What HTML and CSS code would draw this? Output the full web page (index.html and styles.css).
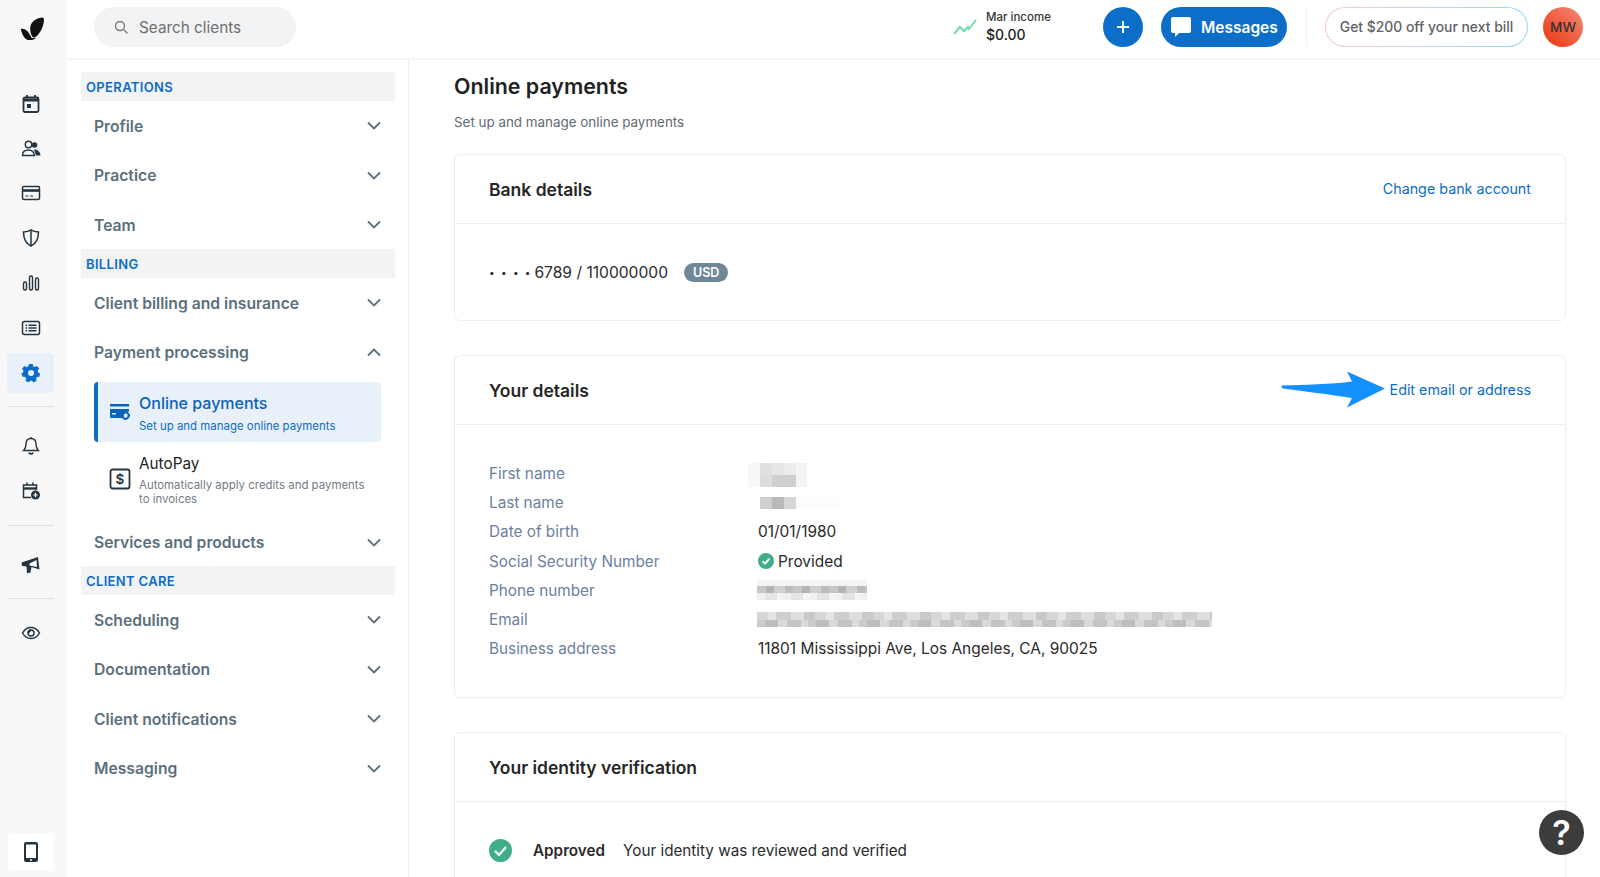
FILE: index.html
```html
<!DOCTYPE html>
<html lang="en">
<head>
<meta charset="utf-8">
<title>Online payments</title>
<link rel="stylesheet" href="styles.css">
</head>
<body>
<div class="app">
  <nav class="rail">
    <div class="rail-logo">
      <svg width="26" height="24" viewBox="0 0 26 24"><path fill="#111" d="M12.500 10C13.500 5 19.500 2 24.500 1.500 26 1.500 26 3.500 25.800 6 25 11 22.500 17 18.500 20.200 16.500 21.500 15 21.800 14.500 21 12.500 18 11.800 14 12.500 10zM2.800 12.800c4-.8 8 2.200 10.700 9 1 .7 3 .5 5-.3-3 2.600-6 3.100-8.500 2.500-3.500-.6-6.300-6-7.200-11.200z"/></svg>
    </div>
    <div class="rail-group first">
      <a class="rail-item"><svg width="20" height="20" viewBox="0 0 20 20" fill="none" stroke="#25343f" stroke-width="1.800"><rect x="2.500" y="3.500" width="15" height="14.500" rx="1.500"/><path d="M2.500 6h15" stroke-width="3"/><path d="M6 1v3M14 1v3"/><rect x="6" y="10" width="4" height="4" fill="#25343f" stroke="none"/></svg></a>
      <a class="rail-item"><svg width="20" height="20" viewBox="0 0 20 20" fill="none" stroke="#25343f" stroke-width="1.400"><circle cx="7.500" cy="5.500" r="3.200"/><path d="M1.500 16.500c0-3.500 2.500-5.500 6-5.500s5.500 2 6 5.500z"/><circle cx="13.500" cy="6" r="2.800" fill="#25343f" stroke="none"/><path d="M13 10.500c3.500-.5 6 2 6.500 6h-4.500z" fill="#25343f" stroke="none"/></svg></a>
      <a class="rail-item"><svg width="20" height="20" viewBox="0 0 20 20" fill="none" stroke="#25343f" stroke-width="1.500"><rect x="1.500" y="3.500" width="17" height="13" rx="1.500"/><path d="M1.500 7.500h17" stroke-width="2.600"/><path d="M4.500 13h3M9 13h3" stroke-width="1.200"/></svg></a>
      <a class="rail-item"><svg width="20" height="20" viewBox="0 0 20 20" fill="none" stroke="#25343f" stroke-width="1.500"><path d="M10 1.800c2 1.300 4.800 2 7.500 2.200 0 6-1.300 11-7.500 14.200C3.800 15 2.500 10 2.500 4c2.700-.2 5.500-.9 7.500-2.200z"/><path d="M10 2v16"/></svg></a>
      <a class="rail-item"><svg width="20" height="20" viewBox="0 0 20 20" fill="none" stroke="#25343f" stroke-width="1.400"><rect x="2.500" y="9" width="3" height="8" rx="1.500"/><rect x="8.500" y="3" width="3" height="14" rx="1.500"/><rect x="14.500" y="5" width="3" height="12" rx="1.500"/></svg></a>
      <a class="rail-item"><svg width="20" height="20" viewBox="0 0 20 20" fill="none" stroke="#25343f" stroke-width="1.500"><rect x="1.500" y="3.500" width="17" height="13" rx="2"/><path d="M4.500 7.300h1.500M4.500 10h1.500M4.500 12.700h1.500M7.500 7.300h8M7.500 10h8M7.500 12.700h8"/></svg></a>
      <a class="rail-item active"><svg width="20" height="20" viewBox="0 0 20 20"><path fill="#0b6dc7" fill-rule="evenodd" d="M8.300 1h3.400l.5 2.400 1.500.7 2.200-1.200 2.300 2.700-1.500 2 .3 1.700 2 1.100-.6 3.400-2.400.2-1 1.400.7 2.300-3 1.700-1.700-1.700h-1.800l-1.700 1.700-3-1.700.7-2.300-1-1.400-2.400-.2L.2 10.500l2-1.100.3-1.700-1.500-2 2.300-2.700 2.200 1.200 1.500-.7zM10 7a3 3 0 1 0 0 6 3 3 0 0 0 0-6z"/></svg></a>
    </div>
    <div class="rail-rule"></div>
    <div class="rail-group">
      <a class="rail-item"><svg width="20" height="20" viewBox="0 0 20 20" fill="none" stroke="#25343f" stroke-width="1.400"><path d="M10 2.500c-3.200 0-5 2.300-5 5.500 0 3.500-.8 5-2.300 6.500h14.600C15.800 13 15 11.500 15 8c0-3.200-1.800-5.500-5-5.500z"/><path d="M10 1v1.500"/><path d="M8 16.500c.3 1.700 3.700 1.700 4 0" stroke-width="1.800"/></svg></a>
      <a class="rail-item"><svg width="20" height="20" viewBox="0 0 20 20" fill="none" stroke="#25343f" stroke-width="1.500"><path d="M10 16.500H2.500v-12.500h13v5"/><path d="M2.500 7.500h13" stroke-width="2.400"/><path d="M6 1.500v3M12 1.500v3"/><circle cx="14.500" cy="14" r="4.500" fill="#25343f" stroke="none"/><path d="M14.500 11.800v4.400M12.300 14h4.400" stroke="#fff" stroke-width="1.200"/></svg></a>
    </div>
    <div class="rail-rule"></div>
    <div class="rail-group">
      <a class="rail-item"><svg width="20" height="20" viewBox="0 0 20 20"><path fill="#25343f" d="M17 2l1.500 12.500-8-2.500-1 5.500-3.500.8-.5-6.800L1 11l-.5-3.500zM15.500 5l-7 3.500v2l7.500 1.500z"/></svg></a>
    </div>
    <div class="rail-rule"></div>
    <div class="rail-group last">
      <a class="rail-item"><svg width="20" height="20" viewBox="0 0 20 20" fill="none" stroke="#25343f" stroke-width="1.500"><path d="M1.500 10C3.500 6.500 6.500 4.500 10 4.500s6.500 2 8.500 5.500c-2 3.500-5 5.500-8.500 5.500S3.500 13.500 1.500 10z"/><circle cx="10" cy="10" r="3"/><path d="M10 7.500a2.500 2.500 0 0 0-2.500 2.500" stroke-width="2"/></svg></a>
    </div>
    <a class="rail-phone"><svg width="16" height="22" viewBox="0 0 16 22"><path fill="#25343f" fill-rule="evenodd" d="M3 1h10a2 2 0 0 1 2 2v16a2 2 0 0 1-2 2H3a2 2 0 0 1-2-2V3a2 2 0 0 1 2-2zm0 2.500V17h10V3.500z"/><circle cx="8" cy="19" r="1" fill="#fff"/></svg></a>
  </nav>

  <div class="page">
    <header class="topbar">
      <div class="search">
        <svg width="15" height="15" viewBox="0 0 15 15" fill="none" stroke="#777" stroke-width="1.300"><circle cx="6" cy="6" r="4.500"/><path d="M9.500 9.500l4 4"/></svg>
        <span>Search clients</span>
      </div>
      <div class="top-right">
        <svg class="trend" width="24" height="18" viewBox="0 0 24 18" fill="none" stroke="#6fdcae" stroke-width="2"><path d="M1 16l6-7 4 4 4-4 1 2 7-9"/></svg>
        <div class="income"><div class="income-label">Mar income</div><div class="income-value">$0.00</div></div>
        <button class="round-add"><svg width="16" height="16" viewBox="0 0 16 16" stroke="#fff" stroke-width="2"><path d="M8 2v12M2 8h12"/></svg></button>
        <button class="messages"><svg width="22" height="24" viewBox="0 0 22 24"><path fill="#fff" d="M3 2h16a2 2 0 0 1 2 2v12a2 2 0 0 1-2 2H9l-4 4v-4H3a2 2 0 0 1-2-2V4a2 2 0 0 1 2-2z"/></svg><span>Messages</span></button>
        <div class="top-rule"></div>
        <button class="promo"><span>Get $200 off your next bill</span></button>
        <div class="avatar">MW</div>
      </div>
    </header>

    <div class="body">
      <aside class="settings">
        <div class="sec-head">OPERATIONS</div>
        <div class="nav-item"><span>Profile</span><svg class="chev" width="14" height="9" viewBox="0 0 14 9"><path d="M1 1.500l6 6 6-6"/></svg></div>
        <div class="nav-item"><span>Practice</span><svg class="chev" width="14" height="9" viewBox="0 0 14 9"><path d="M1 1.500l6 6 6-6"/></svg></div>
        <div class="nav-item last"><span>Team</span><svg class="chev" width="14" height="9" viewBox="0 0 14 9"><path d="M1 1.500l6 6 6-6"/></svg></div>
        <div class="sec-head">BILLING</div>
        <div class="nav-item"><span>Client billing and insurance</span><svg class="chev" width="14" height="9" viewBox="0 0 14 9"><path d="M1 1.500l6 6 6-6"/></svg></div>
        <div class="nav-item"><span>Payment processing</span><svg class="chev" width="14" height="9" viewBox="0 0 14 9"><path d="M1 7.500l6-6 6 6"/></svg></div>
        <div class="sub-item current">
          <svg width="22" height="18" viewBox="0 0 22 18"><path fill="#0b62b9" d="M1 1h19v2.500H1zM1 6h19v2.500a4.500 4.500 0 0 0-4.500 2.500 4.500 4.500 0 0 0-1 4H2a1 1 0 0 1-1-1zM3 10v1.500h4V10z"/><circle cx="16.500" cy="12.500" r="3.200" fill="none" stroke="#0b62b9" stroke-width="2"/><path d="M16.500 8v1.500M16.500 15.500V17M12 12.500h1.500M19.500 12.500H21" stroke="#0b62b9" stroke-width="1.500"/></svg>
          <div><div class="sub-title">Online payments</div><div class="sub-desc">Set up and manage online payments</div></div>
        </div>
        <div class="sub-item auto">
          <svg width="22" height="22" viewBox="0 0 22 22" fill="none"><rect x="1.500" y="1.500" width="19" height="19" rx="2" stroke="#25343f" stroke-width="1.800"/><text x="11" y="16" text-anchor="middle" class="dollar">$</text></svg>
          <div><div class="sub-title">AutoPay</div><div class="sub-desc">Automatically apply credits and payments to invoices</div></div>
        </div>
        <div class="nav-item services"><span>Services and products</span><svg class="chev" width="14" height="9" viewBox="0 0 14 9"><path d="M1 1.500l6 6 6-6"/></svg></div>
        <div class="sec-head care">CLIENT CARE</div>
        <div class="nav-item"><span>Scheduling</span><svg class="chev" width="14" height="9" viewBox="0 0 14 9"><path d="M1 1.500l6 6 6-6"/></svg></div>
        <div class="nav-item"><span>Documentation</span><svg class="chev" width="14" height="9" viewBox="0 0 14 9"><path d="M1 1.500l6 6 6-6"/></svg></div>
        <div class="nav-item"><span>Client notifications</span><svg class="chev" width="14" height="9" viewBox="0 0 14 9"><path d="M1 1.500l6 6 6-6"/></svg></div>
        <div class="nav-item"><span>Messaging</span><svg class="chev" width="14" height="9" viewBox="0 0 14 9"><path d="M1 1.500l6 6 6-6"/></svg></div>
      </aside>

      <main class="main">
        <h1>Online payments</h1>
        <p class="lead">Set up and manage online payments</p>

        <section class="card">
          <div class="card-head"><h2>Bank details</h2><a class="link">Change bank account</a></div>
          <div class="bank"><span class="dots">• • • •</span><span>6789 / 110000000</span><span class="badge">USD</span></div>
        </section>

        <section class="card">
          <div class="card-head"><h2>Your details</h2><a class="link">Edit email or address</a></div>
          <dl class="details">
            <dt>First name</dt>
            <dd><svg class="blur" width="62" height="26" viewBox="0 0 62 26"><rect x="0" y="2" width="12" height="24" fill="#f8f8f8"/><rect x="12" y="2" width="12" height="12" fill="#e0e0e0"/><rect x="24" y="2" width="12" height="12" fill="#e6e6e6"/><rect x="36" y="2" width="12" height="12" fill="#ececec"/><rect x="48" y="2" width="11" height="24" fill="#f4f4f4"/><rect x="12" y="14" width="12" height="12" fill="#dcdcdc"/><rect x="24" y="14" width="24" height="12" fill="#cfcfcf"/></svg></dd>
            <dt>Last name</dt>
            <dd><svg class="blur" width="92" height="18" viewBox="0 0 92 18"><rect x="12" y="3" width="12" height="12" fill="#cfcfcf"/><rect x="24" y="3" width="12" height="12" fill="#b9b9b9"/><rect x="36" y="3" width="12" height="12" fill="#d6d6d6"/><rect x="48" y="3" width="44" height="12" fill="#fcfcfc"/></svg></dd>
            <dt>Date of birth</dt>
            <dd>01/01/1980</dd>
            <dt>Social Security Number</dt>
            <dd class="provided"><svg width="16" height="16" viewBox="0 0 16 16"><circle cx="8" cy="8" r="8" fill="#3fae87"/><path d="M4.500 8.200l2.500 2.500 4.500-5" fill="none" stroke="#fff" stroke-width="1.800"/></svg><span>Provided</span></dd>
            <dt>Phone number</dt>
            <dd><div class="smear phone"></div></dd>
            <dt>Email</dt>
            <dd><div class="smear email"></div></dd>
            <dt>Business address</dt>
            <dd>11801 Mississippi Ave, Los Angeles, CA, 90025</dd>
          </dl>
        </section>

        <section class="card">
          <div class="card-head"><h2>Your identity verification</h2></div>
          <div class="identity">
            <svg width="23" height="23" viewBox="0 0 23 23"><circle cx="11.500" cy="11.500" r="11.500" fill="#3fae87"/><path d="M6 12l4 4 7-8" fill="none" stroke="#fff" stroke-width="2.200"/></svg>
            <strong>Approved</strong>
            <span>Your identity was reviewed and verified</span>
          </div>
        </section>
      </main>
    </div>
  </div>
</div>

<svg class="arrow" width="106" height="40" viewBox="0 0 106 40"><path fill="#1490ff" d="M2 16.500c18-.3 50-1.500 69-4l-5-10 38 17-38 19 5-9.500c-22-3.500-50-7-69-9.500-2-.5-2-3 0-3.500z"/></svg>
<button class="help">?</button>
</body>
</html>
```
FILE: styles.css
```css
* { box-sizing: border-box; }
html, body { margin: 0; height: 877px; overflow: hidden; background: #fff; }
body { font-family: Inter, "Liberation Sans", sans-serif; color: #222; position: relative; }
button { font-family: inherit; border: 0; padding: 0; }

.app { display: flex; height: 877px; }

/* Left rail */
.rail { width: 67px; flex: none; background: #f8f8f8; display: flex; flex-direction: column; align-items: center; padding-right: 6px; }
.rail-logo { height: 56px; display: flex; align-items: center; justify-content: center; }
.rail-group { display: flex; flex-direction: column; align-items: center; width: 100%; }
.rail-group.first { margin-top: 25.500px; }
.rail-group.last { margin-top: -6px; }
.rail-item { width: 47px; height: 44.800px; flex: none; display: flex; align-items: center; justify-content: center; border-radius: 5px; }
.rail-item.active { background: #e8f0f9; height: 40px; margin-top: 2.400px; margin-bottom: 2.400px; }
.rail-rule { width: 47px; height: 1px; flex: none; background: #dedede; margin: 11px 0 17px; }
.rail-phone { margin-top: auto; margin-bottom: 6px; width: 46px; height: 38px; background: #fff; border-radius: 4px; display: flex; align-items: center; justify-content: center; }

/* Top bar */
.page { flex: 1; min-width: 0; display: flex; flex-direction: column; }
.topbar { height: 60px; flex: none; display: flex; align-items: center; justify-content: space-between; padding: 0 17px 4px 27px; border-bottom: 2px solid #f6f6f6; }
.search { width: 202px; height: 40px; border-radius: 20px; background: #f2f3f4; display: flex; align-items: center; gap: 10px; padding-left: 20px; font-size: 15.300px; color: #6b6f73; }
.top-right { display: flex; align-items: center; }
.trend { margin-right: 9px; }
.income { width: 117px; }
.income-label { font-size: 11.500px; font-weight: 500; color: #333; line-height: 16px; }
.income-value { font-size: 14px; font-weight: 500; color: #222; line-height: 20px; }
.round-add { width: 40px; height: 40px; border-radius: 50%; background: #0b6fca; display: flex; align-items: center; justify-content: center; }
.messages { margin-left: 18px; width: 126px; height: 40px; border-radius: 20px; background: #0b6fca; color: #fff; font-size: 15.500px; font-weight: 600; display: flex; align-items: center; gap: 9px; padding-left: 9px; }
.top-rule { width: 1px; height: 38px; background: #efefef; margin: 0 18px 0 19px; }
.promo { width: 203px; height: 40px; border-radius: 20px; border: 1px solid transparent; background: linear-gradient(#fff, #fff) padding-box, linear-gradient(90deg, #f9c9cf, #c5d6e8, #8fdcf5) border-box; font-size: 13.900px; font-weight: 500; color: #5f6367; }
.avatar { margin-left: 15px; width: 40px; height: 40px; border-radius: 50%; background: linear-gradient(45deg, #e8340f, #f58c75); font-size: 13.500px; font-weight: 500; color: #333; display: flex; align-items: center; justify-content: center; }

/* Settings nav */
.body { flex: 1; display: flex; min-height: 0; }
.settings { width: 342px; flex: none; border-right: 1px solid #f0f0f0; padding: 12px 13px 0 14px; }
.sec-head { height: 29px; background: #f1f3f5; color: #0b6cc9; font-size: 13px; font-weight: 600; letter-spacing: .35px; line-height: 30px; padding-left: 5px; }
.nav-item { height: 49.500px; display: flex; align-items: center; justify-content: space-between; padding: 0 14px 0 13px; font-size: 15.700px; font-weight: 600; color: #5b6f7d; }
.nav-item > span { padding-top: 1px; }
.nav-item.last { height: 49px; }
.nav-item.services { height: 51px; padding-top: 3px; }
.chev { fill: none; stroke: #5b6f7d; stroke-width: 1.800; }
.sub-item { display: flex; align-items: center; margin-left: 13px; width: 287px; gap: 8px; padding-left: 15px; }
.sub-item > svg { flex: none; margin-top: -2px; }
.sub-item.current { height: 60px; background: #e8f0f9; border-left: 4px solid #0b6cc9; border-radius: 4px; padding: 1px 0 0 11px; margin-top: 5px; }
.sub-item.auto { height: 73px; padding-top: 2px; }
.sub-title { font-size: 15.300px; line-height: 20px; color: #222; }
.current .sub-title { color: #0b62b9; font-weight: 500; font-size: 16px; }
.sub-desc { font-size: 11.400px; line-height: 14px; color: #6f7d88; margin-top: 4px; width: 235px; letter-spacing: .02px; }
.current .sub-desc { color: #0b6cc9; margin-top: 6px; }
.dollar { font: 600 13.500px Inter, "Liberation Sans", sans-serif; fill: #25343f; }

/* Main */
.main { flex: 1; min-width: 0; padding: 12px 34px 0 45px; overflow: hidden; }
h1 { margin: 0; font-size: 21.400px; line-height: 28px; font-weight: 600; color: #222; }
.lead { margin: 12px 0 22px; font-size: 13.400px; line-height: 20px; color: #5f6b75; }
.card { border: 1px solid #eeeeef; border-radius: 6px; margin-bottom: 34px; }
.card-head { height: 69px; border-bottom: 1px solid #eeeeef; display: flex; align-items: center; justify-content: space-between; padding: 0 34px; }
h2 { margin: 0; font-size: 17.500px; font-weight: 600; color: #262626; }
.link { font-size: 14.300px; color: #0b6cc9; padding-bottom: 2px; }
.bank { height: 96px; display: flex; align-items: center; padding: 0 34px 0; font-size: 15.600px; color: #2a2a2a; }
.dots { margin-right: 4px; font-size: 10px; word-spacing: 3.500px; }
.badge { margin-left: 16px; background: #6f8899; color: #fff; font-size: 12.500px; font-weight: 600; border-radius: 9.500px; height: 19px; line-height: 19px; padding: 0 9px; }
.details { margin: 0; padding: 34px 34px 34px; display: grid; grid-template-columns: 269px 1fr; grid-auto-rows: 29.200px; align-items: center; font-size: 15.300px; }
dt { color: #6b7fa0; }
dd { margin: 0; color: #2a2a2a; display: flex; align-items: center; font-size: 15.450px; }
.blur { flex: none; margin-left: -10px; }
.provided { gap: 4px; }
.smear { flex: none; margin-left: -1px; background-repeat: no-repeat; filter: blur(.6px); }
.smear.phone { width: 110px; height: 20px; background-image:
  linear-gradient(90deg, #f4f4f4 0 100%),
  repeating-linear-gradient(90deg, #c6c6c6 0 9px, #b4b4b4 9px 17px, #cfcfcf 17px 28px, #bdbdbd 28px 36px),
  repeating-linear-gradient(90deg, #f0f0f0 0 8px, #e4e4e4 8px 20px, #f4f4f4 20px 26px);
  background-size: 100% 6px, 100% 7px, 100% 7px; background-position: 0 0, 0 6px, 0 13px; }
.smear.email { width: 455px; height: 15px; background-image:
  repeating-linear-gradient(90deg, #d6d6d6 0 11px, #e4e4e4 11px 19px, #cecece 19px 34px, #dedede 34px 47px, #c9c9c9 47px 58px),
  repeating-linear-gradient(90deg, #cbcbcb 0 8px, #bebebe 8px 21px, #d9d9d9 21px 30px, #c4c4c4 30px 44px, #dbdbdb 44px 51px);
  background-size: 100% 8px, 100% 7px; background-position: 0 0, 0 8px; }
.identity { display: flex; align-items: center; height: 97px; padding-left: 34px; font-size: 15.250px; color: #2a2a2a; }
.identity strong { font-weight: 600; margin-left: 21px; }
.identity span { margin-left: 18px; }

/* Overlays */
.arrow { position: absolute; left: 1281px; top: 369px; }
.help { position: absolute; left: 1539px; top: 810px; width: 45px; height: 45px; border-radius: 50%; background: #3c3c3c; color: #fff; font-size: 34px; font-weight: 600; line-height: 45px; text-align: center; }
```
